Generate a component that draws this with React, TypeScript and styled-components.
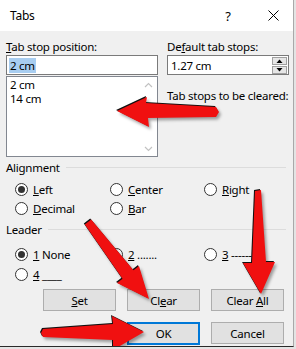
import React from 'react';
import styled, { createGlobalStyle } from 'styled-components';

const GlobalStyle = createGlobalStyle`
  html, body {
    margin: 0;
    padding: 0;
    background: #e4e4e4;
  }
  body {
    font-family: "Noto Sans", "Open Sans", Arial, sans-serif;
    font-size: 11.5px;
    letter-spacing: -0.25px;
    color: #000;
  }
`;

const Dialog = styled.div`
  position: relative;
  width: 293px;
  height: 346px;
  background: #f0f0f0;
  border-right: 1px solid #a9a9a9;
  border-bottom: 1px solid #2a2a2a;
  overflow: hidden;
`;

const TitleBar = styled.div`
  height: 31px;
  background: #fff;
  display: flex;
  align-items: center;
  padding-left: 10px;
`;

const Title = styled.div`
  flex: 1;
  font-size: 12px;
`;

const TitleButton = styled.div<{ $width: number; $gapRight?: number }>`
  width: ${(p) => p.$width}px;
  margin-right: ${(p) => p.$gapRight ?? 0}px;
  height: 31px;
  display: flex;
  align-items: center;
  justify-content: center;
  font-size: 13px;
`;

const Content = styled.div`
  padding: 9px 7px 0 6px;
`;

const TopSection = styled.div`
  display: grid;
  grid-template-columns: 152px 122px;
  column-gap: 9px;
`;

const Column = styled.div`
  display: flex;
  flex-direction: column;
`;

const Label = styled.div<{ $gapTop?: number }>`
  height: 13px;
  line-height: 13px;
  margin-top: ${(p) => p.$gapTop ?? 0}px;
  margin-bottom: 2px;
  white-space: nowrap;
`;

const Key = styled.span`
  text-decoration: underline;
  text-underline-offset: 1px;
`;

const TextInput = styled.div`
  height: 18px;
  border: 1px solid #7a7a7a;
  background: #fff;
  display: flex;
  align-items: center;
  padding-left: 2px;
`;

const Selected = styled.span`
  background: #a8cdf0;
  padding: 0 1px;
  line-height: 15px;
`;

const ListBox = styled.div`
  margin-top: 1px;
  height: 79px;
  border: 1px solid #828790;
  background: #fff;
  display: flex;
`;

const ListItems = styled.div`
  flex: 1;
  padding: 1px 0 0 3px;
  line-height: 14px;
`;

const ScrollBar = styled.div`
  width: 17px;
  display: flex;
  flex-direction: column;
  justify-content: space-between;
  align-items: center;
  padding: 5px 0 4px;
`;

const SpinBox = styled.div`
  height: 18px;
  border: 1px solid #7a7a7a;
  background: #fff;
  display: flex;
  align-items: center;
  padding-left: 3px;
`;

const SpinText = styled.div`
  flex: 1;
`;

const SpinColumn = styled.div`
  display: flex;
  flex-direction: column;
  gap: 1px;
  padding-right: 1px;
`;

const SpinButton = styled.div`
  width: 13px;
  height: 6px;
  background: #e6e6e6;
  border: 1px solid #a0a0a0;
  display: flex;
  align-items: center;
  justify-content: center;
`;

const GroupHeader = styled.div<{ $gapTop: number }>`
  margin-top: ${(p) => p.$gapTop}px;
  height: 13px;
  line-height: 13px;
  display: flex;
  align-items: center;
  gap: 6px;
  &::after {
    content: '';
    flex: 1;
    height: 1px;
    background: #dcdcdc;
  }
`;

const RadioGrid = styled.div<{ $gapTop: number; $row: number }>`
  margin-top: ${(p) => p.$gapTop}px;
  padding-left: 9px;
  display: grid;
  grid-template-columns: 95px 94px 1fr;
  grid-auto-rows: ${(p) => p.$row}px;
`;

const RadioItem = styled.div`
  display: flex;
  align-items: center;
  gap: 5px;
  white-space: nowrap;
`;

const RadioCircle = styled.div<{ $checked?: boolean }>`
  width: 11px;
  height: 11px;
  border: 1px solid #333;
  border-radius: 50%;
  background: #fff;
  display: flex;
  align-items: center;
  justify-content: center;
  &::after {
    content: '';
    display: ${(p) => (p.$checked ? 'block' : 'none')};
    width: 7px;
    height: 7px;
    border-radius: 50%;
    background: #333;
  }
`;

const ButtonRow = styled.div<{ $gapTop: number }>`
  margin-top: ${(p) => p.$gapTop}px;
  display: flex;
  justify-content: flex-end;
  gap: 11px;
  padding-right: 2px;
`;

const Button = styled.div<{ $primary?: boolean }>`
  box-sizing: border-box;
  width: 73px;
  height: ${(p) => (p.$primary ? 23 : 22)}px;
  background: #e1e1e1;
  border: ${(p) => (p.$primary ? '2px solid #0078d7' : '1px solid #adadad')};
  display: flex;
  align-items: center;
  justify-content: center;
`;

const Overlay = styled.svg`
  position: absolute;
  left: 0;
  top: 0;
  pointer-events: none;
`;

const arrows = [
  '117,111 147,97 146,103 216,107 219,112 216,117 148,118 149,127',
  '84.8,224.4 122.5,278.8 117,283 149,299 139,266 133.5,270.2 91.2,219.6',
  '255,191 252,263 243,263 261,294 275,262 266,262 261,190',
  '43,329 113,324 112,316 144,332 113,350 113,340 43,337 41,333',
];

const Chevron = ({ up }: { up?: boolean }) => (
  <svg width="9" height="6" viewBox="0 0 9 6">
    <path
      d={up ? 'M1 5 L4.5 1.5 L8 5' : 'M1 1 L4.5 4.5 L8 1'}
      fill="none"
      stroke="#c2c2c2"
      strokeWidth="1.2"
    />
  </svg>
);

const Triangle = ({ up }: { up?: boolean }) => (
  <svg width="7" height="4" viewBox="0 0 7 4">
    <path d={up ? 'M0.5 4 L3.5 0.5 L6.5 4 Z' : 'M0.5 0 L3.5 3.5 L6.5 0 Z'} fill="#000" />
  </svg>
);

const App: React.FC = () => {
  return (
    <>
      <GlobalStyle />
      <Dialog>
        <TitleBar>
          <Title>Tabs</Title>
          <TitleButton $width={34} $gapRight={8}>?</TitleButton>
          <TitleButton $width={40}>
            <svg width="11" height="11" viewBox="0 0 11 11">
              <path d="M0.5 0.5 L10.5 10.5 M10.5 0.5 L0.5 10.5" stroke="#000" strokeWidth="1" />
            </svg>
          </TitleButton>
        </TitleBar>
        <Content>
          <TopSection>
            <Column>
              <Label>
                <Key>T</Key>ab stop position:
              </Label>
              <TextInput>
                <Selected>2 cm</Selected>
              </TextInput>
              <ListBox>
                <ListItems>
                  <div>2 cm</div>
                  <div>14 cm</div>
                </ListItems>
                <ScrollBar>
                  <Chevron up />
                  <Chevron />
                </ScrollBar>
              </ListBox>
            </Column>
            <Column>
              <Label>
                De<Key>f</Key>ault tab stops:
              </Label>
              <SpinBox>
                <SpinText>1.27 cm</SpinText>
                <SpinColumn>
                  <SpinButton>
                    <Triangle up />
                  </SpinButton>
                  <SpinButton>
                    <Triangle />
                  </SpinButton>
                </SpinColumn>
              </SpinBox>
              <Label $gapTop={14}>Tab stops to be cleared:</Label>
            </Column>
          </TopSection>

          <GroupHeader $gapTop={4}>Alignment</GroupHeader>
          <RadioGrid $gapTop={6} $row={19}>
            <RadioItem>
              <RadioCircle $checked />
              <span>
                <Key>L</Key>eft
              </span>
            </RadioItem>
            <RadioItem>
              <RadioCircle />
              <span>
                <Key>C</Key>enter
              </span>
            </RadioItem>
            <RadioItem>
              <RadioCircle />
              <span>
                <Key>R</Key>ight
              </span>
            </RadioItem>
            <RadioItem>
              <RadioCircle />
              <span>
                <Key>D</Key>ecimal
              </span>
            </RadioItem>
            <RadioItem>
              <RadioCircle />
              <span>
                <Key>B</Key>ar
              </span>
            </RadioItem>
          </RadioGrid>

          <GroupHeader $gapTop={5}>Leader</GroupHeader>
          <RadioGrid $gapTop={8} $row={20}>
            <RadioItem>
              <RadioCircle $checked />
              <span>
                <Key>1</Key> None
              </span>
            </RadioItem>
            <RadioItem>
              <RadioCircle />
              <span>
                <Key>2</Key> .......
              </span>
            </RadioItem>
            <RadioItem>
              <RadioCircle />
              <span>
                <Key>3</Key> -------
              </span>
            </RadioItem>
            <RadioItem>
              <RadioCircle />
              <span>
                <Key>4</Key> ____
              </span>
            </RadioItem>
          </RadioGrid>

          <ButtonRow $gapTop={5}>
            <Button>
              <span>
                <Key>S</Key>et
              </span>
            </Button>
            <Button>
              <span>
                Cl<Key>e</Key>ar
              </span>
            </Button>
            <Button>
              <span>
                Clear <Key>A</Key>ll
              </span>
            </Button>
          </ButtonRow>
          <ButtonRow $gapTop={11}>
            <Button $primary>OK</Button>
            <Button>Cancel</Button>
          </ButtonRow>
        </Content>

        <Overlay width="296" height="349" viewBox="0 0 296 349">
          <defs>
            <filter id="soft" x="-20%" y="-20%" width="140%" height="140%">
              <feGaussianBlur stdDeviation="1.6" />
            </filter>
          </defs>
          {arrows.map((pts, i) => (
            <g key={i}>
              <polygon points={pts} fill="rgba(0,0,0,0.35)" transform="translate(2,2.5)" filter="url(#soft)" />
              <polygon points={pts} fill="#111" transform="translate(-1,-1)" />
              <polygon points={pts} fill="#f01010" />
            </g>
          ))}
        </Overlay>
      </Dialog>
    </>
  );
};

export default App;
